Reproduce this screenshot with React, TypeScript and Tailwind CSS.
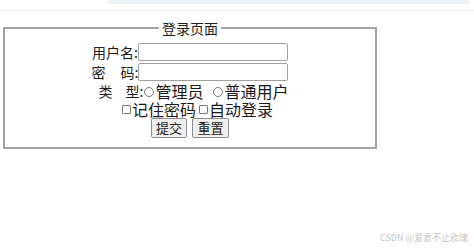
import React from "react";

const cjk = '"Noto Sans CJK SC", "Noto Sans", sans-serif';

function Radio() {
  return (
    <input
      type="radio"
      name="role"
      className="appearance-none m-0 ml-[1px] mr-[1px] h-[10px] w-[10px] shrink-0 rounded-full border border-[#7a7a7a] bg-white"
    />
  );
}

function Check() {
  return (
    <input
      type="checkbox"
      className="appearance-none m-0 mr-[1px] h-[9px] w-[9px] shrink-0 rounded-[1px] border border-[#7a7a7a] bg-white"
    />
  );
}

export default function App() {
  return (
    <div
      className="relative h-[248px] w-[474px] overflow-hidden bg-white text-[#1a1a1a]"
      style={{ fontFamily: cjk }}
    >
      <div className="ml-[107px] mr-[4px] h-[4px] rounded-bl-[6px] rounded-br-[6px] bg-[#eef1f7]" />
      <div className="mt-[6px] h-px bg-[#ececec]" />

      <fieldset className="mx-[3px] mt-[7px] w-[374px] border-2 border-[#a3a3a3] px-3 pb-[9px] pt-[4px]">
        <legend className="mx-auto px-[3px] text-[14px] leading-[20px]">登录页面</legend>

        <div className="flex h-[20px] items-center justify-center text-[14px]">
          <span>用户名:</span>
          <input
            type="text"
            className="m-0 h-[18px] w-[150px] rounded-[2px] border border-[#a0a0a0] bg-white px-1 outline-none"
          />
        </div>
        <div className="flex h-[20px] items-center justify-center text-[14px]">
          <span className="flex w-[43px] justify-between">
            <span>密</span>
            <span>码</span>
          </span>
          <span>:</span>
          <input
            type="password"
            className="m-0 h-[18px] w-[150px] rounded-[2px] border border-[#a0a0a0] bg-white px-1 outline-none"
          />
        </div>
        <div className="flex h-[19px] items-center justify-center pl-[7px] text-[16px] leading-[19px]">
          <span className="flex w-[41px] justify-between text-[14px]">
            <span>类</span>
            <span>型</span>
          </span>
          <span className="text-[14px]">:</span>
          <Radio />
          <span>管理员</span>
          <span className="ml-[9px]" />
          <Radio />
          <span>普通用户</span>
        </div>
        <div className="flex h-[17px] items-center justify-center pl-[15px] text-[16px] leading-[17px]">
          <Check />
          <span>记住密码</span>
          <span className="ml-[3px]" />
          <Check />
          <span>自动登录</span>
        </div>
        <div className="flex h-[20px] items-center justify-center gap-[5px]">
          <button className="h-[20px] w-[36px] rounded-[2px] border border-[#8e8e8e] bg-[#efefef] text-[13px] leading-[18px] text-[#222]">
            提交
          </button>
          <button className="h-[20px] w-[37px] rounded-[2px] border border-[#8e8e8e] bg-[#efefef] text-[13px] leading-[18px] text-[#222]">
            重置
          </button>
        </div>
      </fieldset>

      <div className="absolute right-[6px] top-[232px] text-[9px] leading-[11px] text-[#c4c4c4]">
        CSDN @爱意不止玫瑰
      </div>
    </div>
  );
}
